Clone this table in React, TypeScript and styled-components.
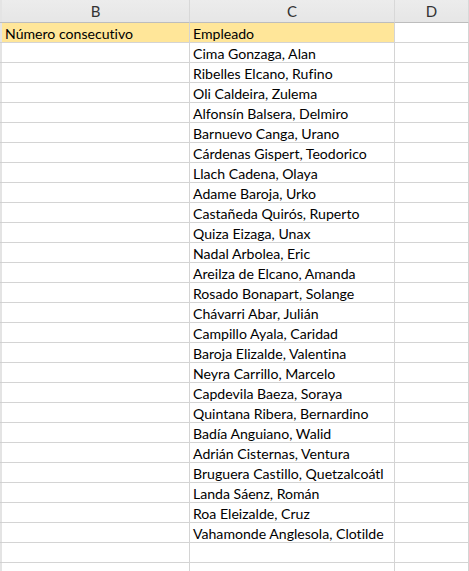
import React from "react";
import styled, { createGlobalStyle } from "styled-components";

const Global = createGlobalStyle`
  html, body { margin: 0; padding: 0; background: #fff; }
  body {
    font-family: "Lato", "Liberation Sans", sans-serif;
    overflow: hidden;
    font-variant-ligatures: none;
  }
`;

const Sheet = styled.div`
  display: grid;
  grid-template-columns: 2px 188px 205px 1fr;
  width: 469px;
  height: 571px;
  overflow: hidden;
  background: #fff;
`;

const Strip = styled.div<{ $head?: boolean }>`
  background: #e4e4e4;
  border-bottom: 1px solid ${(p) => (p.$head ? "#bdbdbd" : "#d0d0d0")};
  height: ${(p) => (p.$head ? 22 : 19)}px;
`;

const ColHead = styled.div`
  height: 22px;
  background: linear-gradient(#ececec, #e6e6e6);
  border-bottom: 1px solid #bdbdbd;
  border-right: 1px solid #d8d8d8;
  display: flex;
  align-items: center;
  justify-content: center;
  font-size: 15px;
  color: #333;
`;

const Cell = styled.div<{ $hl?: boolean }>`
  height: 19px;
  box-sizing: border-box;
  height: 20px;
  background: ${(p) => (p.$hl ? "#ffe699" : "#fff")};
  border-bottom: 1px solid #d4d4d4;
  border-right: 1px solid #d4d4d4;
  display: flex;
  align-items: center;
  padding: 1px 0 0 3px;
  font-size: 14.1px;
  color: #000;
  white-space: nowrap;
  overflow: visible;
`;

const names = [
  "Cima Gonzaga, Alan",
  "Ribelles Elcano, Rufino",
  "Oli Caldeira, Zulema",
  "Alfonsín Balsera, Delmiro",
  "Barnuevo Canga, Urano",
  "Cárdenas Gispert, Teodorico",
  "Llach Cadena, Olaya",
  "Adame Baroja, Urko",
  "Castañeda Quirós, Ruperto",
  "Quiza Eizaga, Unax",
  "Nadal Arbolea, Eric",
  "Areilza de Elcano, Amanda",
  "Rosado Bonapart, Solange",
  "Chávarri Abar, Julián",
  "Campillo Ayala, Caridad",
  "Baroja Elizalde, Valentina",
  "Neyra Carrillo, Marcelo",
  "Capdevila Baeza, Soraya",
  "Quintana Ribera, Bernardino",
  "Badía Anguiano, Walid",
  "Adrián Cisternas, Ventura",
  "Bruguera Castillo, Quetzalcoátl",
  "Landa Sáenz, Román",
  "Roa Eleizalde, Cruz",
  "Vahamonde Anglesola, Clotilde",
  "",
  "",
];

export default function App() {
  return (
    <>
      <Global />
      <Sheet>
        <Strip $head />
        <ColHead>B</ColHead>
        <ColHead>C</ColHead>
        <ColHead>D</ColHead>
        <Strip />
        <Cell $hl>Número consecutivo</Cell>
        <Cell $hl>Empleado</Cell>
        <Cell />
        {names.map((n, i) => (
          <React.Fragment key={i}>
            <Strip />
            <Cell />
            <Cell>{n}</Cell>
            <Cell />
          </React.Fragment>
        ))}
      </Sheet>
    </>
  );
}
